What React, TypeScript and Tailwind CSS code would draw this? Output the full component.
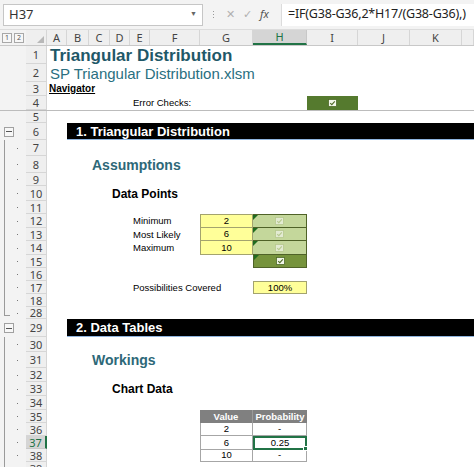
import type { ReactNode } from "react";

const cols =
  "grid grid-cols-[20px_22px_21px_20px_20px_50px_53px_54px_51px_52px_52px_1fr] flex-1 h-full";

type OutlineKind = "none" | "btn" | "line" | "end";

function Outline({ kind, dot }: { kind: OutlineKind; dot?: boolean }) {
  return (
    <div className="w-[26px] shrink-0 h-full flex bg-[#f3f3f3]">
      <div className="w-[14px] h-full flex">
        {kind === "btn" && (
          <div className="ml-[4px] self-center w-[10px] h-[10px] border border-[#a0a0a0] bg-[#f7f7f7] flex items-center justify-center">
            <div className="w-[6px] h-px bg-[#555]" />
          </div>
        )}
        {kind === "line" && <div className="ml-[4px] w-px h-full bg-[#9a9a9a]" />}
        {kind === "end" && (
          <div className="ml-[4px] w-[6px] h-[9px] border-l border-b border-[#9a9a9a]" />
        )}
      </div>
      <div className="flex-1 flex items-center pl-[3px]">
        {dot && <div className="w-px h-px bg-[#777]" />}
      </div>
    </div>
  );
}

function Row({
  n,
  h,
  outline = "none",
  dot,
  active,
  children,
}: {
  n: number;
  h: string;
  outline?: OutlineKind;
  dot?: boolean;
  active?: boolean;
  children?: ReactNode;
}) {
  return (
    <div className={`flex ${h}`}>
      <Outline kind={outline} dot={dot} />
      <div
        className={
          active
            ? "w-[21px] shrink-0 flex items-center justify-center text-[11px] leading-none bg-[#d5d5d5] text-[#217346] border-b border-[#c8c8c8] border-r-2 border-r-[#217346]"
            : "w-[21px] shrink-0 flex items-center justify-center text-[11px] leading-none bg-[#efefef] text-[#444] border-b border-r border-[#d6d6d6]"
        }
        style={{ fontFamily: "'Noto Sans', sans-serif" }}
      >
        {n}
      </div>
      <div className={cols}>{children}</div>
    </div>
  );
}

function CheckIcon({ tone }: { tone: "light" | "dark" }) {
  const fill = tone === "light" ? "#e3ebd2" : "#f2f6ea";
  const stroke = tone === "light" ? "#b7c98f" : "#4f6a28";
  return (
    <svg width="9" height="8" viewBox="0 0 9 8">
      <rect x="0.5" y="0.5" width="8" height="7" fill={fill} stroke={stroke} strokeWidth="0.8" />
      <path d="M2.2 4.1 L3.8 5.6 L6.8 2.3" fill="none" stroke={stroke} strokeWidth="1.1" />
    </svg>
  );
}

function Corner() {
  return (
    <div className="absolute left-0 top-0 w-0 h-0 border-t-[5px] border-r-[5px] border-t-[#1f6b1f] border-r-transparent" />
  );
}

const colLetters = ["A", "B", "C", "D", "E", "F", "G", "H", "I", "J", "K", ""];

export default function App() {
  const ui = { fontFamily: "'Noto Sans', sans-serif" };
  return (
    <div
      className="w-[474px] h-[467px] overflow-hidden bg-white text-black"
      style={{ fontFamily: "'Liberation Sans', Arial, sans-serif" }}
    >
      {/* formula bar */}
      <div className="h-[30px] flex items-center bg-[#f3f3f3] border-b border-[#dcdcdc]" style={ui}>
        <div className="ml-[3px] w-[200px] h-[22px] bg-white border border-[#c6c6c6] flex items-center justify-between px-[5px]">
          <span className="text-[13px] text-[#333]">H37</span>
          <span className="text-[7px] text-[#666]">▼</span>
        </div>
        <div className="w-[20px] flex flex-col items-center gap-[2px]">
          <div className="w-px h-px bg-[#999]" />
          <div className="w-px h-px bg-[#999]" />
          <div className="w-px h-px bg-[#999]" />
        </div>
        <div className="w-[58px] flex items-center gap-[8px] pl-[3px] text-[#b0b0b0] text-[11px]">
          <span>✕</span>
          <span>✓</span>
          <span className="italic text-[#555] text-[11px]">fx</span>
        </div>
        <div className="flex-1 h-[22px] bg-white border-l border-[#dcdcdc] flex items-center pl-[6px] text-[12.5px] tracking-[-0.2px] text-[#222] whitespace-nowrap overflow-hidden">
          =IF(G38-G36,2*H17/(G38-G36),)
        </div>
      </div>

      {/* column headers */}
      <div className="flex h-[16px] border-b border-[#c8c8c8]" style={ui}>
        <div className="w-[26px] shrink-0 bg-[#f3f3f3] flex items-center gap-[2px] pl-[2px]">
          <div className="w-[10px] h-[10px] border border-[#a8a8a8] bg-[#f7f7f7] text-[7px] leading-none flex items-center justify-center text-[#555]">1</div>
          <div className="w-[10px] h-[10px] border border-[#a8a8a8] bg-[#f7f7f7] text-[7px] leading-none flex items-center justify-center text-[#555]">2</div>
        </div>
        <div className="w-[21px] shrink-0 bg-[#efefef] border-r border-[#d6d6d6] flex items-end justify-end p-[2px]">
          <div className="w-0 h-0 border-l-[7px] border-b-[7px] border-l-transparent border-b-[#b8b8b8]" />
        </div>
        <div className={cols}>
          {colLetters.map((c) => (
            <div
              key={c || "end"}
              className={
                c === "H"
                  ? "flex items-center justify-center text-[11px] leading-none text-[#217346] bg-[#d5d5d5] border-r border-[#c8c8c8] border-b-2 border-b-[#217346]"
                  : "flex items-center justify-center text-[11px] leading-none text-[#444] bg-[#efefef] border-r border-[#d6d6d6]"
              }
            >
              {c}
            </div>
          ))}
        </div>
      </div>

      <Row n={1} h="h-[18px]">
        <div className="col-start-1 col-end-13 pl-[3px] flex items-end text-[17px] leading-none font-bold text-[#1f5868] whitespace-nowrap">
          Triangular Distribution
        </div>
      </Row>
      <Row n={2} h="h-[18px]">
        <div className="col-start-1 col-end-13 pl-[3px] flex items-end pb-[1px] text-[15px] leading-none text-[#2a6f80] whitespace-nowrap">
          SP Triangular Distribution.xlsm
        </div>
      </Row>
      <Row n={3} h="h-[14px]">
        <div className="col-start-1 col-end-6 pl-[2px] flex items-center text-[10px] leading-none font-bold underline whitespace-nowrap">
          Navigator
        </div>
      </Row>
      <div className="border-b border-[#bcbcbc]">
        <Row n={4} h="h-[14px]">
          <div className="col-start-5 col-end-9 pl-[3px] flex items-center text-[9.5px] leading-none whitespace-nowrap">
            Error Checks:
          </div>
          <div className="col-start-9 bg-[#557a2e] flex items-center justify-center">
            <CheckIcon tone="dark" />
          </div>
        </Row>
      </div>
      <Row n={5} h="h-[12px]" />
      <Row n={6} h="h-[17px]" outline="btn">
        <div className="col-start-2 col-end-13 bg-black border-b border-[#8fb4de] flex items-center pl-[9px] text-[13px] leading-none font-bold text-white whitespace-nowrap">
          1. Triangular Distribution
        </div>
      </Row>
      <Row n={7} h="h-[16px]" outline="line" dot />
      <Row n={8} h="h-[17px]" outline="line" dot>
        <div className="col-start-3 col-end-13 pl-[3px] flex items-center text-[14px] leading-none font-bold text-[#2d6878] whitespace-nowrap">
          Assumptions
        </div>
      </Row>
      <Row n={9} h="h-[13px]" outline="line" dot />
      <Row n={10} h="h-[15px]" outline="line" dot>
        <div className="col-start-4 col-end-13 pl-[2px] flex items-center text-[12px] leading-none font-bold whitespace-nowrap">
          Data Points
        </div>
      </Row>
      <Row n={11} h="h-[13px]" outline="line" dot />
      {[
        { n: 12, h: "h-[14px]", label: "Minimum", v: "2", top: true },
        { n: 13, h: "h-[13px]", label: "Most Likely", v: "6", top: false },
        { n: 14, h: "h-[14px]", label: "Maximum", v: "10", top: false },
      ].map((r) => (
        <Row key={r.n} n={r.n} h={r.h} outline="line" dot>
          <div className="col-start-5 col-end-7 pl-[3px] flex items-center text-[9.5px] leading-none whitespace-nowrap">
            {r.label}
          </div>
          <div
            className={
              r.top
                ? "col-start-7 bg-[#ffff99] border border-[#a3a36e] flex items-center justify-center text-[9.5px] leading-none"
                : "col-start-7 bg-[#ffff99] border-x border-b border-[#a3a36e] flex items-center justify-center text-[9.5px] leading-none"
            }
          >
            {r.v}
          </div>
          <div
            className={
              r.top
                ? "relative col-start-8 bg-[#c4d79b] border-t border-r border-b border-[#4f6228] flex items-center justify-center"
                : "relative col-start-8 bg-[#c4d79b] border-r border-b border-[#4f6228] flex items-center justify-center"
            }
          >
            <Corner />
            <CheckIcon tone="light" />
          </div>
        </Row>
      ))}
      <Row n={15} h="h-[13px]" outline="line" dot>
        <div className="relative col-start-8 bg-[#76933c] border-x border-b border-[#4f6228] flex items-center justify-center">
          <Corner />
          <CheckIcon tone="dark" />
        </div>
      </Row>
      <Row n={16} h="h-[13px]" outline="line" dot />
      <Row n={17} h="h-[13px]" outline="line" dot>
        <div className="col-start-5 col-end-8 pl-[3px] flex items-center text-[9.5px] leading-none whitespace-nowrap">
          Possibilities Covered
        </div>
        <div className="col-start-8 bg-[#ffff99] border border-[#a3a36e] flex items-center justify-center text-[9.5px] leading-none">
          100%
        </div>
      </Row>
      <Row n={18} h="h-[13px]" outline="line" dot />
      <Row n={28} h="h-[12px]" outline="end" dot />
      <Row n={29} h="h-[18px]" outline="btn">
        <div className="col-start-2 col-end-13 bg-black border-b border-[#8fb4de] flex items-center pl-[9px] text-[13px] leading-none font-bold text-white whitespace-nowrap">
          2. Data Tables
        </div>
      </Row>
      <Row n={30} h="h-[15px]" outline="line" dot />
      <Row n={31} h="h-[16px]" outline="line" dot>
        <div className="col-start-3 col-end-13 pl-[3px] flex items-center text-[14px] leading-none font-bold text-[#2d6878] whitespace-nowrap">
          Workings
        </div>
      </Row>
      <Row n={32} h="h-[14px]" outline="line" dot />
      <Row n={33} h="h-[14px]" outline="line" dot>
        <div className="col-start-4 col-end-13 pl-[2px] flex items-center text-[12px] leading-none font-bold whitespace-nowrap">
          Chart Data
        </div>
      </Row>
      <Row n={34} h="h-[14px]" outline="line" dot />
      <Row n={35} h="h-[13px]" outline="line" dot>
        <div className="col-start-7 bg-[#808080] border-r border-[#9a9a9a] flex items-center justify-center text-[9.5px] leading-none font-bold text-white">
          Value
        </div>
        <div className="col-start-8 bg-[#808080] flex items-center justify-center text-[9.5px] leading-none font-bold text-white">
          Probability
        </div>
      </Row>
      {[
        { n: 36, v: "2", p: "-" },
        { n: 37, v: "6", p: "0.25" },
        { n: 38, v: "10", p: "-" },
      ].map((r) => (
        <Row key={r.n} n={r.n} h="h-[13px]" outline="line" dot active={r.n === 37}>
          <div className="col-start-7 border-x border-b border-[#a6a6a6] flex items-center justify-center text-[9.5px] leading-none">
            {r.v}
          </div>
          {r.n === 37 ? (
            <div className="relative col-start-8 border-2 border-[#217346] flex items-center justify-center text-[9.5px] leading-none">
              {r.p}
              <div className="absolute -right-[3px] -bottom-[3px] w-[5px] h-[5px] bg-[#217346] border border-white" />
            </div>
          ) : (
            <div className="col-start-8 border-r border-b border-[#a6a6a6] flex items-center justify-center text-[9.5px] leading-none">
              {r.p}
            </div>
          )}
        </Row>
      ))}
      <Row n={39} h="h-[13px]" outline="line" dot />
    </div>
  );
}
